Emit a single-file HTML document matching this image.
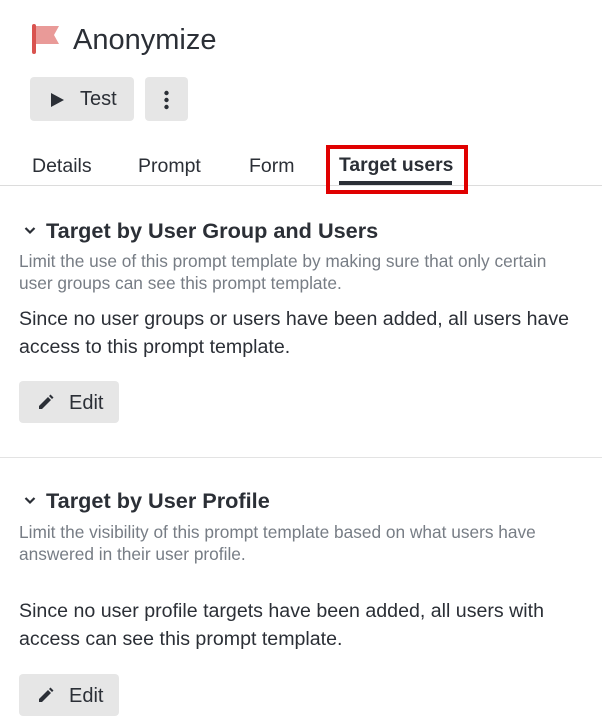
<!DOCTYPE html><html><head><style>
body{margin:0;width:602px;height:726px;background:#fff;font-family:"Liberation Sans",sans-serif;color:#2b2f36;position:relative;overflow:hidden}
.a{position:absolute;white-space:nowrap}
.btn{position:absolute;background:#e6e6e6;border-radius:4px}
.d{color:#777d85;font-size:17.3px;line-height:22px}
.b{font-size:19.6px;line-height:28px}
.h{font-size:21.7px;font-weight:bold;color:#2b2f36}
</style></head><body>
<svg class="a" style="left:31px;top:24px" width="28" height="31"><rect x="1" y="0" width="4" height="30" rx="2" fill="#d9534f"/><path d="M5 2H28L23 11L28 20H5Z" fill="#e99a98"/></svg>
<div class="a" style="left:73px;top:24px;font-size:29px;">Anonymize</div>
<div class="btn" style="left:30px;top:77px;width:104px;height:44px"></div>
<svg class="a" style="left:50px;top:92px" width="16" height="16"><path d="M1 1L14 8L1 15Z" fill="#2b2f36"/></svg>
<div class="a" style="left:80px;top:88px;font-size:20px">Test</div>
<div class="btn" style="left:145px;top:77px;width:43px;height:44px"></div>
<svg class="a" style="left:163px;top:90px" width="8" height="20"><circle cx="3.5" cy="3" r="2.2" fill="#2b2f36"/><circle cx="3.5" cy="10" r="2.2" fill="#2b2f36"/><circle cx="3.5" cy="17" r="2.2" fill="#2b2f36"/></svg>
<div class="a" style="left:32px;top:155px;font-size:19.5px">Details</div>
<div class="a" style="left:138px;top:155px;font-size:19.5px">Prompt</div>
<div class="a" style="left:249px;top:155px;font-size:19.5px">Form</div>
<div class="a" style="left:339px;top:155px;font-size:19.3px;font-weight:bold">Target users</div>
<div class="a" style="left:339px;top:181px;width:113px;height:4px;background:#2b2f36"></div>
<div class="a" style="left:0;top:185px;width:602px;height:1px;background:#dcdcdc"></div>
<div class="a" style="left:326px;top:145px;width:134px;height:41px;border:4px solid #e00000"></div>

<svg class="a" style="left:24px;top:226px" width="12" height="10"><path d="M1.5 2L6 6.5L10.5 2" stroke="#2b2f36" stroke-width="2.2" fill="none"/></svg>
<div class="a h" style="left:46px;top:218px">Target by User Group and Users</div>
<div class="a d" style="left:19px;top:250px">Limit the use of this prompt template by making sure that only certain<br>user groups can see this prompt template.</div>
<div class="a b" style="left:19px;top:305px">Since no user groups or users have been added, all users have<br>access to this prompt template.</div>
<div class="btn" style="left:19px;top:381px;width:100px;height:42px"></div>
<svg class="a" style="left:38px;top:394px" width="16" height="16"><path d="M1 15V12L10 3L13 6L4 15Z M11 2L12.5 0.5L15.5 3.5L14 5Z" fill="#2b2f36"/></svg>
<div class="a" style="left:69px;top:392px;font-size:20px">Edit</div>
<div class="a" style="left:0;top:457px;width:602px;height:1px;background:#e3e3e3"></div>

<svg class="a" style="left:24px;top:496px" width="12" height="10"><path d="M1.5 2L6 6.5L10.5 2" stroke="#2b2f36" stroke-width="2.2" fill="none"/></svg>
<div class="a h" style="left:46px;top:488px">Target by User Profile</div>
<div class="a d" style="left:19px;top:521px">Limit the visibility of this prompt template based on what users have<br>answered in their user profile.</div>
<div class="a b" style="left:19px;top:597px">Since no user profile targets have been added, all users with<br>access can see this prompt template.</div>
<div class="btn" style="left:19px;top:674px;width:100px;height:42px"></div>
<svg class="a" style="left:38px;top:687px" width="16" height="16"><path d="M1 15V12L10 3L13 6L4 15Z M11 2L12.5 0.5L15.5 3.5L14 5Z" fill="#2b2f36"/></svg>
<div class="a" style="left:69px;top:685px;font-size:20px">Edit</div>
</body></html>
